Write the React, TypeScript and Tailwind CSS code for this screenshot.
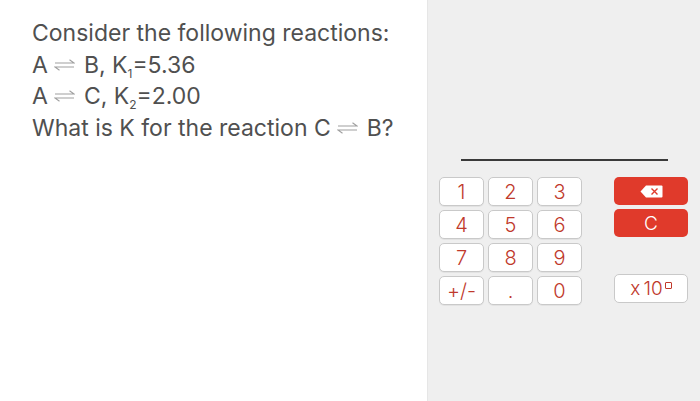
import React from 'react';

const Eq: React.FC = () => (
  <svg width="21" height="12" viewBox="0 0 21 12" className="inline-block ml-[6px] mr-[9px] align-[2px]" fill="none" stroke="#a0a0a0" strokeWidth="1.1">
    <path d="M1 4 H20 L15.5 0.8" />
    <path d="M20 8 H1 L5.5 11.2" />
  </svg>
);

const Sub: React.FC<{ n: string }> = ({ n }) => (
  <span className="text-[12px] leading-none relative top-[5px]">{n}</span>
);

const keys = ['1', '2', '3', '4', '5', '6', '7', '8', '9', '+/-', '.', '0'];

const Key: React.FC<{ label: string }> = ({ label }) => (
  <button className="h-[29px] rounded-[5px] bg-white border border-[#c9c9c9] shadow-[0_1px_0_rgba(0,0,0,0.05)] flex items-center justify-center text-[#c0392b] text-[20px] font-light leading-none">
    {label}
  </button>
);

export default function App() {
  return (
    <div className="flex w-[700px] h-[401px] bg-white" style={{ fontFamily: 'Inter, "Liberation Sans", Arial, sans-serif' }}>
      <div className="w-[427px] pl-[32px] pt-[18px] text-[23px] leading-[31.5px] text-[#505050]">
        <div>Consider the following reactions:</div>
        <div>A<Eq />B, K<Sub n="1" />=5.36</div>
        <div>A<Eq />C, K<Sub n="2" />=2.00</div>
        <div>What is K for the reaction C<Eq />B?</div>
      </div>
      <div className="flex-1 bg-[#efefef] border-l border-[#e6e6e6]">
        <div className="ml-[33px] mt-[159px] w-[207px] h-[2px] bg-[#3a3a3a]" />
        <div className="flex mt-[16px] ml-[11px]">
          <div className="grid grid-cols-[45px_45px_45px] gap-x-[4px] gap-y-[4px]">
            {keys.map((k) => (
              <Key key={k} label={k} />
            ))}
          </div>
          <div className="ml-[32px] w-[74px] flex flex-col gap-[4px]">
            <button className="h-[28px] rounded-[5px] bg-[#e03a2b] flex items-center justify-center">
              <svg width="23" height="13" viewBox="0 0 23 13">
                <path d="M0.5 6.5 L6 0.5 H21.5 Q22.5 0.5 22.5 1.5 V11.5 Q22.5 12.5 21.5 12.5 H6 Z" fill="#ffffff" />
                <path d="M11.5 3.5 L17.5 9.5 M17.5 3.5 L11.5 9.5" stroke="#e03a2b" strokeWidth="1.4" />
              </svg>
            </button>
            <button className="h-[28px] rounded-[5px] bg-[#e03a2b] flex items-center justify-center text-white text-[19px] font-light leading-none">
              C
            </button>
            <div className="h-[29px]" />
            <button className="h-[29px] rounded-[5px] bg-white border border-[#c9c9c9] flex items-center justify-center text-[#c0392b] text-[19px] font-light leading-none">
              <span>x</span>
              <span className="ml-[3px]">10</span>
              <span className="ml-[2px] mb-[7px] w-[7px] h-[7px] border border-[#c0392b] rounded-[1px]" />
            </button>
          </div>
        </div>
      </div>
    </div>
  );
}
